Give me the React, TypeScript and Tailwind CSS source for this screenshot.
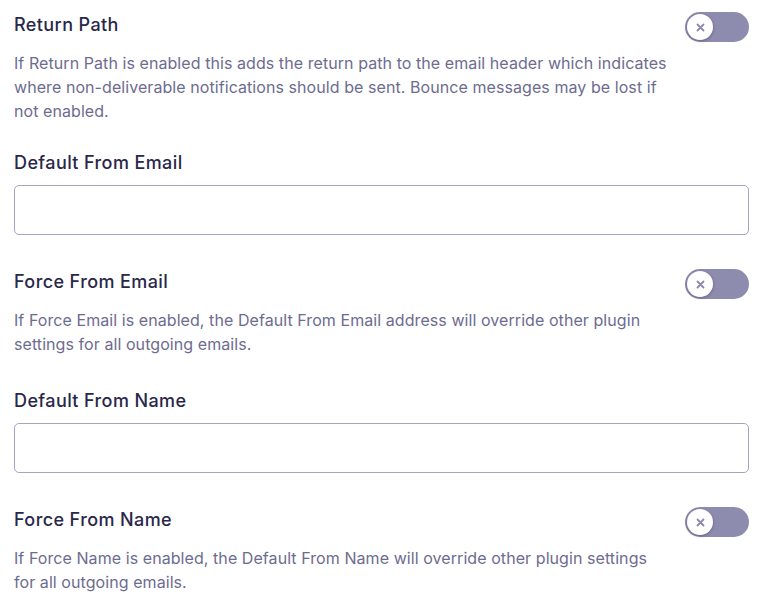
import React from "react";

function Toggle() {
  return (
    <div className="pt-1">
      <div className="flex h-[30px] w-16 items-center rounded-full bg-[#8d8bae] px-[2px]">
        <div className="flex h-[26px] w-[26px] items-center justify-center rounded-full bg-white shadow-[0_1px_3px_rgba(30,29,58,0.35)]">
          <svg width="9" height="9" viewBox="0 0 9 9" fill="none">
            <path d="M1.5 1.5L7.5 7.5M7.5 1.5L1.5 7.5" stroke="#8a88ab" strokeWidth="1.8" strokeLinecap="round" />
          </svg>
        </div>
      </div>
    </div>
  );
}

function ToggleSetting({ title, desc, className }: { title: string; desc: string; className?: string }) {
  return (
    <div className={className}>
      <div className="flex h-8 items-center justify-between">
        <div className="text-[18px] font-medium leading-7 tracking-[0.4px] text-[#29274a]">{title}</div>
        <Toggle />
      </div>
      <p className="mt-[10px] max-w-[657px] text-[16px] leading-6 tracking-[0.07px] text-[#6d6c90]">{desc}</p>
    </div>
  );
}

function TextSetting({ label, className }: { label: string; className?: string }) {
  return (
    <div className={className}>
      <div className="text-[18px] font-medium leading-7 tracking-[0.4px] text-[#29274a]">{label}</div>
      <input
        type="text"
        className="mt-2 block h-[50px] w-full rounded-[5px] border border-[#a5a4c4] bg-white px-3 text-[15px] outline-none"
      />
    </div>
  );
}

export default function App() {
  return (
    <main className="min-h-screen bg-white pl-[14px] pr-[19px] pt-[9px] font-['Inter',sans-serif]">
      <ToggleSetting
        title="Return Path"
        desc="If Return Path is enabled this adds the return path to the email header which indicates where non-deliverable notifications should be sent. Bounce messages may be lost if not enabled."
      />
      <TextSetting label="Default From Email" className="mt-[26px]" />
      <ToggleSetting
        className="mt-[31px]"
        title="Force From Email"
        desc="If Force Email is enabled, the Default From Email address will override other plugin settings for all outgoing emails."
      />
      <TextSetting label="Default From Name" className="mt-[31px]" />
      <ToggleSetting
        className="mt-[31px]"
        title="Force From Name"
        desc="If Force Name is enabled, the Default From Name will override other plugin settings for all outgoing emails."
      />
    </main>
  );
}
